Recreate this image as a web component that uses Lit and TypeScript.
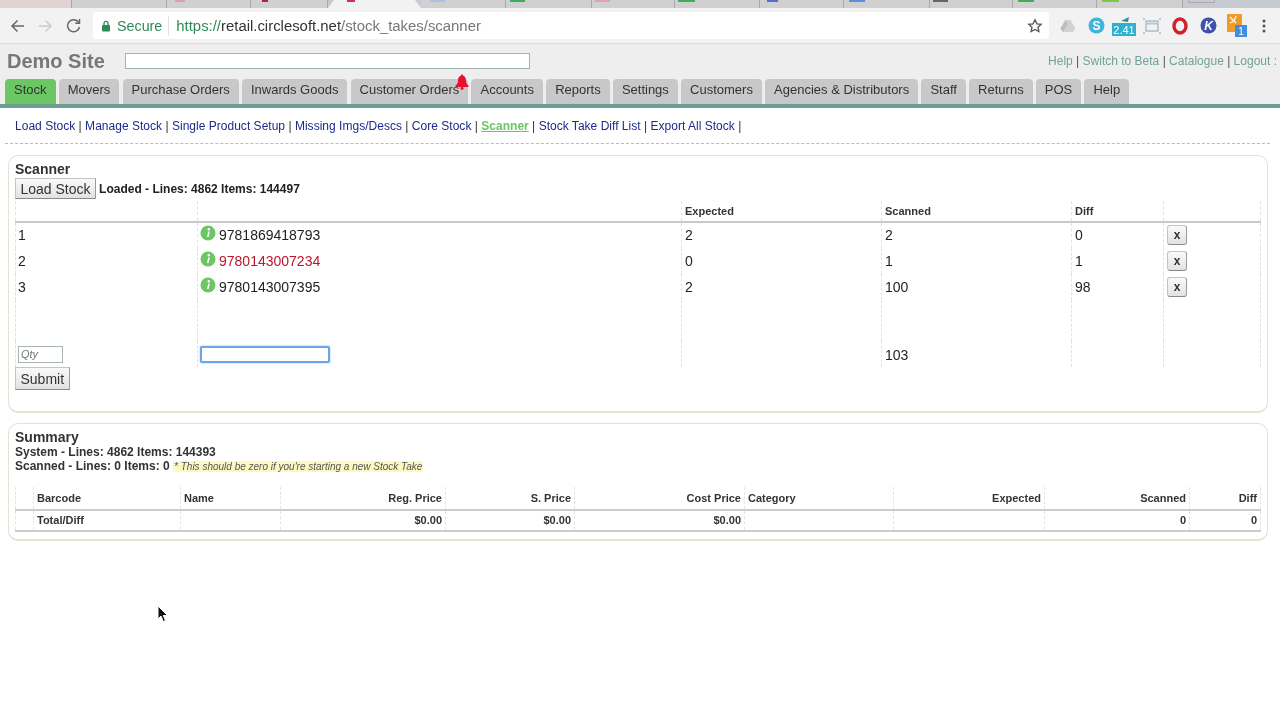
import { LitElement, html, css, svg } from "lit";
import { customElement } from "lit/decorators.js";

// w = tab width, x = favicon offset inside the tab, fw = favicon width
const browserTabs = [
  { w: 72, x: 0, fw: 0, fav: "", tint: true },
  { w: 95, x: 0, fw: 0, fav: "" },
  { w: 84, x: 8, fw: 10, fav: "#d9a0b4" },
  { w: 77, x: 11, fw: 6, fav: "#a8283c" },
  { w: 93, x: 19, fw: 8, fav: "#c8324a", active: true },
  { w: 85, x: 9, fw: 15, fav: "#aebfe6" },
  { w: 86, x: 4, fw: 15, fav: "#3fae5c" },
  { w: 83, x: 3, fw: 15, fav: "#e0a0b8" },
  { w: 85, x: 3, fw: 17, fav: "#3fae5c" },
  { w: 84, x: 7, fw: 11, fav: "#5a6cd0" },
  { w: 86, x: 5, fw: 16, fav: "#5a90e0" },
  { w: 83, x: 3, fw: 15, fav: "#666666" },
  { w: 84, x: 5, fw: 16, fav: "#3fae5c" },
  { w: 86, x: 5, fw: 17, fav: "#7cc84a" },
];

const mainTabs = [
  "Stock",
  "Movers",
  "Purchase Orders",
  "Inwards Goods",
  "Customer Orders",
  "Accounts",
  "Reports",
  "Settings",
  "Customers",
  "Agencies & Distributors",
  "Staff",
  "Returns",
  "POS",
  "Help",
];

const subLinks = [
  "Load Stock",
  "Manage Stock",
  "Single Product Setup",
  "Missing Imgs/Descs",
  "Core Stock",
  "Scanner",
  "Stock Take Diff List",
  "Export All Stock",
];

const scanRows = [
  { n: "1", code: "9781869418793", exp: "2", scan: "2", diff: "0" },
  { n: "2", code: "9780143007234", exp: "0", scan: "1", diff: "1", bad: true },
  { n: "3", code: "9780143007395", exp: "2", scan: "100", diff: "98" },
];

const infoIcon = svg`<svg class="info" width="16" height="16" viewBox="0 0 16 16">
  <circle cx="8" cy="8" r="7.5" fill="#6cc664"/>
  <circle cx="8.8" cy="4.2" r="1.2" fill="#fff"/>
  <path d="M8.2 6.6 L7 12 H8.6 L9.8 6.6 Z" fill="#fff"/>
</svg>`;

@customElement("app-root")
export class AppRoot extends LitElement {
  static styles = css`
    :host {
      display: block;
      position: relative;
      width: 1280px;
      height: 720px;
      overflow: hidden;
      background: #fff;
      font-family: "Liberation Sans", Arial, sans-serif;
      color: #222;
      filter: blur(0.4px);
    }
    .strip {
      display: flex;
      height: 8px;
      background: #c6cad0;
      overflow: hidden;
    }
    .btab {
      box-sizing: border-box;
      border-right: 1px solid #a9a9a9;
      background: #d0d0d0;
      flex: none;
    }
    .btab.tint {
      background: #e3d2d2;
    }
    .btab.active {
      background: #f2f2f2;
      border-right: 0;
      clip-path: polygon(0 100%, 6px 0, calc(100% - 6px) 0, 100% 100%);
    }
    .fav {
      display: block;
      height: 2px;
    }
    .lasttab {
      width: 27px;
      height: 3px;
      box-sizing: border-box;
      border: 1px solid #aaa;
      border-top: 0;
      margin-left: 5px;
      flex: none;
    }
    .toolbar {
      display: flex;
      align-items: center;
      height: 35px;
      background: #f2f2f2;
      border-bottom: 1px solid #dcdcdc;
      padding: 0 0 0 10px;
    }
    .nav {
      display: flex;
      gap: 13px;
      width: 83px;
      flex: none;
      align-items: center;
    }
    .omni {
      display: flex;
      align-items: center;
      width: 956px;
      height: 27px;
      background: #fff;
      border-radius: 3px;
      box-sizing: border-box;
      padding: 0 6px 0 8px;
      flex: none;
    }
    .secure {
      display: flex;
      align-items: center;
      gap: 6px;
      font-size: 14.3px;
      color: #2f8a58;
      padding-right: 6px;
      border-right: 1px solid #e2e2e2;
      margin-right: 7px;
      line-height: 20px;
    }
    .url {
      font-size: 14.9px;
      color: #777;
      flex: 1;
    }
    .url .g {
      color: #2f8a58;
    }
    .url b {
      color: #333;
      font-weight: 400;
    }
    .exts {
      display: grid;
      grid-template-columns: repeat(8, 28px);
      align-items: center;
      justify-items: center;
      padding-left: 5px;
    }
    .head {
      background: #eeeeee;
      height: 60px;
      display: flex;
      flex-direction: column;
    }
    .head-top {
      display: flex;
      align-items: center;
      height: 35px;
      padding: 0 8px 0 7px;
    }
    .site {
      font-size: 20px;
      font-weight: 700;
      color: #777;
      width: 118px;
      flex: none;
    }
    .search {
      width: 405px;
      height: 16px;
      box-sizing: border-box;
      border: 1px solid #9fb5b0;
      background: #fff;
      flex: none;
      padding: 0;
      margin: 0 0 2px 0;
    }
    .tools {
      margin-left: auto;
      margin-right: -5px;
      padding-bottom: 1px;
      font-size: 12px;
      color: #555;
    }
    .tools a {
      color: #6fa29a;
    }
    .tabs {
      display: flex;
      gap: 3.2px;
      padding: 0 0 0 5px;
      height: 25px;
      position: relative;
    }
    .tab {
      box-sizing: border-box;
      padding: 0 9px;
      background: #c8c8c8;
      border-radius: 4px 4px 0 0;
      font-size: 13px;
      line-height: 22px;
      color: #333;
      flex: none;
    }
    .tab.on {
      background: #6cc664;
    }
    .rule {
      height: 4px;
      background: #6d9c94;
    }
    .sub {
      font-size: 12px;
      letter-spacing: 0.02px;
      line-height: 16px;
      padding: 10px 0 0 15px;
      color: #333;
    }
    .sub a {
      color: #1c2a8c;
    }
    .sub a.on {
      color: #6cc664;
      font-weight: 700;
      text-decoration: underline;
    }
    .dash {
      margin: 9px 10px 0 5px;
      border-top: 1px dashed #bbb;
    }
    .panel {
      box-sizing: border-box;
      margin: 0 12px 0 8px;
      border: 1px solid #dde6d4;
      border-bottom-width: 2px;
      border-radius: 10px;
    }
    .scanner {
      margin-top: 11px;
      height: 258px;
      padding: 6px 6px 0 6px;
    }
    .summary {
      margin-top: 10px;
      height: 118px;
      padding: 6px 6px 0 6px;
    }
    h2 {
      margin: 0;
      font-size: 14px;
      line-height: 15px;
      font-weight: 700;
      color: #333;
    }
    .loadrow {
      display: flex;
      align-items: center;
      gap: 3px;
      margin-top: 1px;
      font-size: 12px;
      font-weight: 700;
      color: #222;
    }
    button {
      font-family: inherit;
      font-size: 14px;
      color: #333;
      background: linear-gradient(#fafafa, #e2e2e2);
      border: 1px solid #c4c4c4;
      border-bottom-color: #8a8a8a;
      border-right-color: #9a9a9a;
      margin: 0;
      padding: 0 4.5px;
      height: 21px;
      line-height: 18px;
    }
    .submit {
      height: 23px;
      display: block;
    }
    table {
      border-collapse: collapse;
      table-layout: fixed;
    }
    .t1 {
      width: 1245px;
      margin-top: 2px;
    }
    .t1 col:nth-child(1) {
      width: 182px;
    }
    .t1 col:nth-child(2) {
      width: 484px;
    }
    .t1 col:nth-child(3) {
      width: 200px;
    }
    .t1 col:nth-child(4) {
      width: 190px;
    }
    .t1 col:nth-child(5) {
      width: 92px;
    }
    .t1 col:nth-child(6) {
      width: 97px;
    }
    .t1 th {
      font-size: 11px;
      text-align: left;
      height: 21px;
      padding: 0 0 0 3px;
      border-bottom: 2px solid #c9c9c9;
      border-right: 1px dashed #e2e2e2;
      color: #333;
      box-sizing: border-box;
    }
    .t1 td {
      font-size: 14px;
      height: 26px;
      padding: 0 0 0 3px;
      border-right: 1px dashed #e2e2e2;
      color: #222;
      box-sizing: border-box;
    }
    .t1 td:nth-child(-n + 2) {
      padding-left: 2px;
    }
    .t1 tr:nth-child(2) td {
      padding-bottom: 2px;
    }
    .t1 tr > :first-child {
      border-left: 1px dashed #e2e2e2;
    }
    .t1 .spacer td {
      height: 41px;
    }
    .t1 .entry td {
      height: 26px;
    }
    .t1 .entry .total {
      padding-top: 2px;
    }
    .code {
      display: flex;
      align-items: center;
      gap: 3px;
    }
    .info {
      position: relative;
      top: -2px;
      flex: none;
    }
    .bad {
      color: #c0142c;
    }
    .x {
      font-size: 12px;
      font-weight: 700;
      width: 20px;
      height: 20px;
      padding: 0;
      border-radius: 3px;
      display: block;
    }
    .qty {
      width: 45px;
      height: 17px;
      box-sizing: border-box;
      border: 1px solid #a9b5b0;
      padding: 0 2px;
      margin: 0;
      font-family: inherit;
      font-size: 11px;
      font-style: italic;
      display: block;
    }
    .qty::placeholder {
      color: #777;
    }
    .focus {
      width: 130px;
      height: 17px;
      box-sizing: border-box;
      border: 2px solid #6aa5e8;
      border-radius: 2px;
      box-shadow: 0 0 2px #8fbdf0;
      padding: 0;
      margin: 0;
      display: block;
    }
    .sum {
      font-size: 12px;
      line-height: 14px;
      font-weight: 700;
      color: #333;
    }
    .note {
      font-size: 10px;
      font-weight: 400;
      font-style: italic;
      background: #fdf8c0;
      padding: 0 1px;
      color: #555;
    }
    .t2 {
      width: 1245px;
      margin-top: 13px;
    }
    .t2 col:nth-child(1) {
      width: 18px;
    }
    .t2 col:nth-child(2) {
      width: 147px;
    }
    .t2 col:nth-child(3) {
      width: 100px;
    }
    .t2 col:nth-child(4) {
      width: 165px;
    }
    .t2 col:nth-child(5) {
      width: 129px;
    }
    .t2 col:nth-child(6) {
      width: 170px;
    }
    .t2 col:nth-child(7) {
      width: 149px;
    }
    .t2 col:nth-child(8) {
      width: 151px;
    }
    .t2 col:nth-child(9) {
      width: 145px;
    }
    .t2 col:nth-child(10) {
      width: 71px;
    }
    .t2 th,
    .t2 td {
      font-size: 11px;
      font-weight: 700;
      text-align: left;
      padding: 0 3px;
      color: #333;
      border-right: 1px dashed #e4e4e4;
      box-sizing: border-box;
    }
    .t2 th {
      height: 23px;
      border-bottom: 2px solid #cccccc;
    }
    .t2 td {
      height: 21px;
      padding-bottom: 2px;
      border-bottom: 2px solid #cccccc;
    }
    .t2 .r {
      text-align: right;
    }
    .t2 tr > :first-child {
      border-left: 1px dashed #e4e4e4;
    }
    .bell {
      position: absolute;
      left: 455px;
      top: 74px;
    }
    .cursor {
      position: absolute;
      left: 157px;
      top: 605px;
    }
  `;

  render() {
    return html`
      <div class="strip">
        ${browserTabs.map(
          (t) => html`<div
            class="btab ${t.active ? "active" : ""} ${t.tint ? "tint" : ""}"
            style="width:${t.w}px;padding-left:${t.x}px"
          >
            ${t.fav
              ? html`<span class="fav" style="background:${t.fav};width:${t.fw}px"></span>`
              : ""}
          </div>`
        )}
        <div class="lasttab"></div>
      </div>
      <div class="toolbar">
        <div class="nav">
          <svg width="15" height="14" viewBox="0 0 15 14" fill="none" stroke="#666" stroke-width="1.5">
            <path d="M14 7H2M7.5 1.5 2 7l5.5 5.5" />
          </svg>
          <svg width="15" height="14" viewBox="0 0 15 14" fill="none" stroke="#ccc" stroke-width="1.5">
            <path d="M1 7h12M7.5 1.5 13 7l-5.5 5.5" />
          </svg>
          <svg width="15" height="15" viewBox="0 0 15 15" fill="none" stroke="#666" stroke-width="1.5">
            <path d="M12.6 4.4A6 6 0 1 0 13.5 9" />
            <path d="M13.5 1v4.2H9.3" />
          </svg>
        </div>
        <div class="omni">
          <div class="secure">
            <svg width="10" height="12" viewBox="0 0 10 12">
              <path d="M3 5V3.4a2 2 0 0 1 4 0V5" fill="none" stroke="#2f8a58" stroke-width="1.3" />
              <rect x="1" y="5" width="8" height="6.5" rx="1" fill="#2f8a58" />
            </svg>
            Secure
          </div>
          <div class="url">
            <span class="g">https://</span><b>retail.circlesoft.net</b>/stock_takes/scanner
          </div>
          <svg width="16" height="16" viewBox="0 0 16 16" fill="none" stroke="#555" stroke-width="1.3">
            <path d="M8 1.800l1.900 4 4.300.5-3.200 2.900.9 4.300L8 11.400l-3.900 2.100.9-4.300L1.800 6.300l4.300-.5z" />
          </svg>
        </div>
        <div class="exts">
          <svg width="16" height="14" viewBox="0 0 16 14">
            <path d="M5.500 1h5l5 8.500L13 13H3L.5 9.500z" fill="#d2d2d2" />
            <path d="M5.500 1L.5 9.500 3 13l5-8.500z" fill="#bdbdbd" />
          </svg>
          <svg width="17" height="17" viewBox="0 0 17 17">
            <circle cx="8.500" cy="8.500" r="8" fill="#3fb4dc" />
            <text x="8.500" y="13" font-size="12" font-weight="700" fill="#fff" text-anchor="middle">S</text>
          </svg>
          <svg width="24" height="20" viewBox="0 0 24 20">
            <path d="M9 5l8-4-1 5z" fill="#3a8aa0" />
            <rect y="7" width="24" height="13" fill="#2fb0d0" />
            <text x="12" y="17.500" font-size="11" fill="#fff" text-anchor="middle">2.41</text>
          </svg>
          <svg width="18" height="16" viewBox="0 0 18 16" fill="none" stroke="#8fa3ad" stroke-width="1">
            <rect x="3" y="3" width="12" height="10" />
            <path d="M3 5.500h12" stroke-width="2" stroke="#b9c6cd" />
            <path d="M0 1h2M16 1h2M0 15h2M16 15h2" />
          </svg>
          <svg width="16" height="18" viewBox="0 0 16 18">
            <ellipse cx="8" cy="9" rx="6" ry="7" fill="none" stroke="#d0202c" stroke-width="3.400" />
          </svg>
          <svg width="17" height="17" viewBox="0 0 17 17">
            <circle cx="8.500" cy="8.500" r="8" fill="#3f51a8" />
            <text x="8.500" y="13" font-size="12" font-weight="700" font-style="italic" fill="#fff" text-anchor="middle">K</text>
          </svg>
          <svg width="22" height="24" viewBox="0 0 22 24">
            <rect x="2" width="15" height="18" fill="#ef9a2a" />
            <path d="M5 3l6 6M11 2l-2 5M5 9l4-2" stroke="#fff" stroke-width="1.200" fill="none" />
            <rect x="10" y="11" width="12" height="12" fill="#3f8fe0" />
            <text x="16" y="21" font-size="10" fill="#fff" text-anchor="middle">1</text>
          </svg>
          <svg width="4" height="14" viewBox="0 0 4 14" fill="#555">
            <circle cx="2" cy="2" r="1.500" /><circle cx="2" cy="7" r="1.500" /><circle cx="2" cy="12" r="1.500" />
          </svg>
        </div>
      </div>

      <div class="head">
        <div class="head-top">
          <div class="site">Demo Site</div>
          <input class="search" />
          <div class="tools">
            <a>Help</a> | <a>Switch to Beta</a> | <a>Catalogue</a> | <a>Logout</a> <a>:</a>
          </div>
        </div>
        <div class="tabs">
          ${mainTabs.map(
            (t, i) => html`<div class="tab ${i === 0 ? "on" : ""}">${t}</div>`
          )}
        </div>
      </div>
      <div class="rule"></div>

      <div class="sub">
        ${subLinks.map(
          (l) => html`<a class=${l === "Scanner" ? "on" : ""}>${l}</a> | `
        )}
      </div>
      <div class="dash"></div>

      <section class="panel scanner">
        <h2>Scanner</h2>
        <div class="loadrow">
          <button>Load Stock</button>
          <span>Loaded - Lines: 4862 Items: 144497</span>
        </div>
        <table class="t1">
          <colgroup><col /><col /><col /><col /><col /><col /></colgroup>
          <tr>
            <th></th><th></th><th>Expected</th><th>Scanned</th><th>Diff</th><th></th>
          </tr>
          ${scanRows.map(
            (r) => html`<tr>
              <td>${r.n}</td>
              <td>
                <div class="code ${r.bad ? "bad" : ""}">${infoIcon}<span>${r.code}</span></div>
              </td>
              <td>${r.exp}</td>
              <td>${r.scan}</td>
              <td>${r.diff}</td>
              <td><button class="x">x</button></td>
            </tr>`
          )}
          <tr class="spacer"><td></td><td></td><td></td><td></td><td></td><td></td></tr>
          <tr class="entry">
            <td><input class="qty" placeholder="Qty" /></td>
            <td><input class="focus" /></td>
            <td></td>
            <td class="total">103</td>
            <td></td>
            <td></td>
          </tr>
        </table>
        <button class="submit">Submit</button>
      </section>

      <section class="panel summary">
        <h2>Summary</h2>
        <div class="sum">System - Lines: 4862 Items: 144393</div>
        <div class="sum">
          Scanned - Lines: 0 Items: 0
          <span class="note">* This should be zero if you're starting a new Stock Take</span>
        </div>
        <table class="t2">
          <colgroup><col /><col /><col /><col /><col /><col /><col /><col /><col /><col /></colgroup>
          <tr>
            <th></th><th>Barcode</th><th>Name</th><th class="r">Reg. Price</th><th class="r">S. Price</th>
            <th class="r">Cost Price</th><th>Category</th><th class="r">Expected</th><th class="r">Scanned</th>
            <th class="r">Diff</th>
          </tr>
          <tr>
            <td></td><td>Total/Diff</td><td></td><td class="r">$0.00</td><td class="r">$0.00</td>
            <td class="r">$0.00</td><td></td><td></td><td class="r">0</td><td class="r">0</td>
          </tr>
        </table>
      </section>

      <svg class="bell" width="14" height="16" viewBox="0 0 14 16">
        <path d="M7 0.5c.9 0 1.2.7 1.2 1.2C10.500 2.400 11 4.500 11 7c0 2 1 3.500 2.500 4.500V13H.5v-1.500C2 10.500 3 9 3 7c0-2.500.5-4.600 2.800-5.300C5.800 1.200 6.100.5 7 .5z" fill="#e8102a" />
        <circle cx="7" cy="14.300" r="1.500" fill="#e8102a" />
      </svg>
      <svg class="cursor" width="12" height="18" viewBox="0 0 12 18">
        <path d="M1 1v13l3-3 2.200 5.500 2.300-1L6.300 10.500H10.500z" fill="#111" stroke="#fff" stroke-width="1" />
      </svg>
    `;
  }
}

declare global {
  interface HTMLElementTagNameMap {
    "app-root": AppRoot;
  }
}
